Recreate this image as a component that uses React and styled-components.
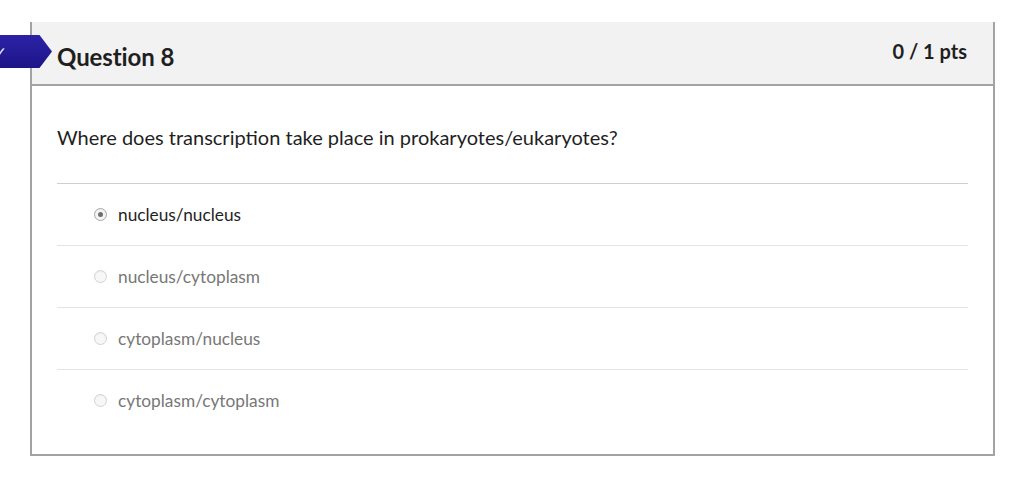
import React from "react";
import styled, { createGlobalStyle } from "styled-components";

const Global = createGlobalStyle`
  html, body { margin: 0; padding: 0; background: #fff; }
  body { font-family: Lato, "Open Sans", sans-serif; color: #2d3b45; }
`;

const Page = styled.div`
  padding: 22px 0 30px 30px;
  width: 965px;
`;

const Card = styled.section`
  position: relative;
  border: 2px solid #a3a3a3;
  border-top: none;
  background: #fff;
`;

const Header = styled.header`
  display: flex;
  justify-content: space-between;
  align-items: flex-start;
  height: 62px;
  background: #f2f2f2;
  border-bottom: 2px solid #a3a3a3;
  padding: 0 26px 0 25px;
`;

const Title = styled.h2`
  margin: 20px 0 0;
  font-size: 24px;
  line-height: 30px;
  font-weight: 700;
  color: #1f1f1f;
  letter-spacing: -0.1px;
`;

const Points = styled.div`
  margin-top: 16px;
  font-size: 20px;
  line-height: 26px;
  font-weight: 700;
  color: #1f1f1f;
`;

const Flag = styled.div`
  position: absolute;
  left: -32px;
  top: 13px;
  width: 52px;
  height: 33px;
  overflow: hidden;
  background: linear-gradient(180deg, #2c22a6 0%, #1d1588 100%);
  clip-path: polygon(0 0, 76% 0, 100% 50%, 76% 100%, 0 100%);
  color: #fff;
  font-size: 14px;
  line-height: 33px;
  text-indent: -5px;
`;

const Body = styled.div`
  padding: 0 25px 23px;
`;

const QuestionText = styled.p`
  margin: 37px 0 32px;
  font-size: 20px;
  line-height: 28px;
  color: #1f1f1f;
`;

const Answers = styled.ul`
  list-style: none;
  margin: 0;
  padding: 0;
  border-top: 1px solid #cfcfcf;
`;

const Answer = styled.li`
  display: flex;
  align-items: center;
  gap: 11px;
  height: 61px;
  padding-left: 37px;
  border-top: ${(p) => (p.$first ? "none" : "1px solid #e4e4e4")};
  font-size: 17.3px;
  color: ${(p) => (p.$selected ? "#1f1f1f" : "#777")};
`;

const Radio = styled.span`
  position: relative;
  flex: none;
  width: 11px;
  height: 11px;
  border-radius: 50%;
  border: 1px solid ${(p) => (p.$selected ? "#a8a8a8" : "#d2d2d2")};
  background: ${(p) => (p.$selected ? "#f4f4f4" : "#f7f7f7")};
  box-shadow: inset 0 1px 1px rgba(0, 0, 0, 0.04);
  &::after {
    content: "";
    display: ${(p) => (p.$selected ? "block" : "none")};
    position: absolute;
    left: 3px;
    top: 3px;
    width: 5px;
    height: 5px;
    border-radius: 50%;
    background: #6f6f6f;
  }
`;

const answers = [
  "nucleus/nucleus",
  "nucleus/cytoplasm",
  "cytoplasm/nucleus",
  "cytoplasm/cytoplasm",
];

export default function App() {
  return (
    <>
      <Global />
      <Page>
        <Card>
          <Flag>✓</Flag>
          <Header>
            <Title>Question 8</Title>
            <Points>0 / 1 pts</Points>
          </Header>
          <Body>
            <QuestionText>
              Where does transcription take place in prokaryotes/eukaryotes?
            </QuestionText>
            <Answers>
              {answers.map((a, i) => (
                <Answer key={a} $first={i === 0} $selected={i === 0}>
                  <Radio $selected={i === 0} />
                  {a}
                </Answer>
              ))}
            </Answers>
          </Body>
        </Card>
      </Page>
    </>
  );
}
